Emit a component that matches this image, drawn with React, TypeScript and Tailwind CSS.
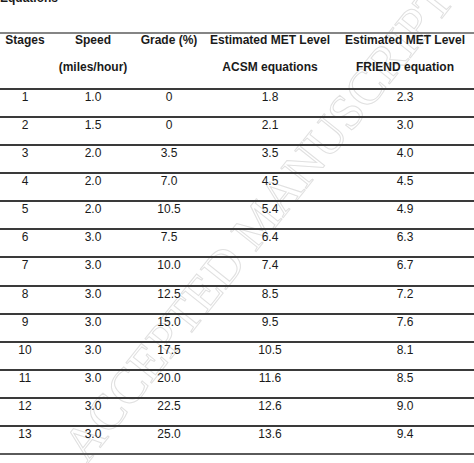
import React from "react";

const rows: [string, string, string, string, string][] = [
  ["1", "1.0", "0", "1.8", "2.3"],
  ["2", "1.5", "0", "2.1", "3.0"],
  ["3", "2.0", "3.5", "3.5", "4.0"],
  ["4", "2.0", "7.0", "4.5", "4.5"],
  ["5", "2.0", "10.5", "5.4", "4.9"],
  ["6", "3.0", "7.5", "6.4", "6.3"],
  ["7", "3.0", "10.0", "7.4", "6.7"],
  ["8", "3.0", "12.5", "8.5", "7.2"],
  ["9", "3.0", "15.0", "9.5", "7.6"],
  ["10", "3.0", "17.5", "10.5", "8.1"],
  ["11", "3.0", "20.0", "11.6", "8.5"],
  ["12", "3.0", "22.5", "12.6", "9.0"],
  ["13", "3.0", "25.0", "13.6", "9.4"],
];

const cols = "grid grid-cols-[50px_86px_66px_136px_134px]";

export default function App() {
  return (
    <div className="relative flex flex-col w-[474px] h-[463px] overflow-hidden bg-white font-['Liberation_Sans',Arial,sans-serif] text-[12px] text-[#1a1a1a]">
      <div
        aria-hidden
        className="pointer-events-none absolute left-[258px] top-[222px] -translate-x-1/2 -translate-y-1/2 -rotate-[51.5deg] whitespace-nowrap font-['Liberation_Serif','Times_New_Roman',serif] text-[50px] leading-none text-transparent [-webkit-text-stroke:1px_#e0e0e0]"
      >
        ACCEPTED MANUSCRIPT
      </div>

      <div className="relative flex flex-col h-[32px] shrink-0">
        <div className="mt-[-9px] font-bold leading-[14px]">Equations</div>
      </div>

      <div className="relative">
        <div className={`${cols} h-[56px] border-t-2 border-[#858585] font-bold leading-[12px] text-center`}>
          <div>Stages</div>
          <div className="flex flex-col gap-[15px]">
            <span>Speed</span>
            <span>(miles/hour)</span>
          </div>
          <div>Grade (%)</div>
          <div className="flex flex-col gap-[15px]">
            <span>Estimated MET Level</span>
            <span>ACSM equations</span>
          </div>
          <div className="flex flex-col gap-[15px]">
            <span>Estimated MET Level</span>
            <span>FRIEND equation</span>
          </div>
        </div>
        {rows.map((r, i) => (
          <div
            key={i}
            className={`${cols} border-t-2 border-[#3a3a3a] leading-[14px] text-center ${
              i === rows.length - 1 ? "h-[30.08px] border-b-2 border-b-[#5a5a5a]" : "h-[28.08px]"
            }`}
          >
            {r.map((c, j) => (
              <div key={j}>{c}</div>
            ))}
          </div>
        ))}
      </div>
    </div>
  );
}
